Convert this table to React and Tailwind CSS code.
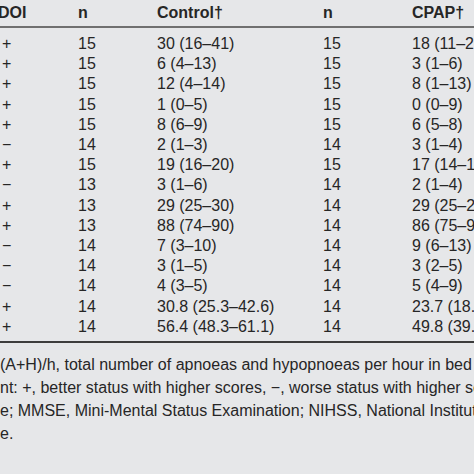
import React from 'react';

const rows = [
    ['+', '15', '30 (16–41)', '15', '18 (11–23)'],
    ['+', '15', '6 (4–13)', '15', '3 (1–6)'],
    ['+', '15', '12 (4–14)', '15', '8 (1–13)'],
    ['+', '15', '1 (0–5)', '15', '0 (0–9)'],
    ['+', '15', '8 (6–9)', '15', '6 (5–8)'],
    ['−', '14', '2 (1–3)', '14', '3 (1–4)'],
    ['+', '15', '19 (16–20)', '15', '17 (14–19)'],
    ['−', '13', '3 (1–6)', '14', '2 (1–4)'],
    ['+', '13', '29 (25–30)', '14', '29 (25–29)'],
    ['+', '13', '88 (74–90)', '14', '86 (75–90)'],
    ['−', '14', '7 (3–10)', '14', '9 (6–13)'],
    ['−', '14', '3 (1–5)', '14', '3 (2–5)'],
    ['−', '14', '4 (3–5)', '14', '5 (4–9)'],
    ['+', '14', '30.8 (25.3–42.6)', '14', '23.7 (18.5–30.2)'],
    ['+', '14', '56.4 (48.3–61.1)', '14', '49.8 (39.5–57.4)'],
];

const cols = 'grid grid-cols-[78px_79px_166px_89px_200px]';

export default function App() {
    return (
        <div className="w-[474px] h-[474px] overflow-hidden bg-[#e6e7e9] text-[#262626] font-['Liberation_Sans',sans-serif] text-[16px] whitespace-nowrap">
            {/* Header */}
            <div className={`${cols} h-[28px] items-center font-bold border-b-2 border-[#707070]`}>
                <div className="-ml-[2px]">DOI</div>
                <div>n</div>
                <div>Control†</div>
                <div>n</div>
                <div>CPAP†</div>
            </div>

            {/* Body */}
            <div className="pt-[6px] pb-[4px] border-b-2 border-[#3d3d3d]">
                {rows.map((r, i) => (
                    <div key={i} className={`${cols} h-[20.2px] items-center leading-none`}>
                        <div className="pl-[2px]">{r[0]}</div>
                        <div>{r[1]}</div>
                        <div>{r[2]}</div>
                        <div>{r[3]}</div>
                        <div>{r[4]}</div>
                    </div>
                ))}
            </div>

            {/* Footnotes */}
            <div className="pt-[10px] leading-[23px]">
                <div>(A+H)/h, total number of apnoeas and hypopnoeas per hour in bed</div>
                <div>nt: +, better status with higher scores, −, worse status with higher scores</div>
                <div>e; MMSE, Mini-Mental Status Examination; NIHSS, National Institutes</div>
                <div>e.</div>
            </div>
        </div>
    );
}
